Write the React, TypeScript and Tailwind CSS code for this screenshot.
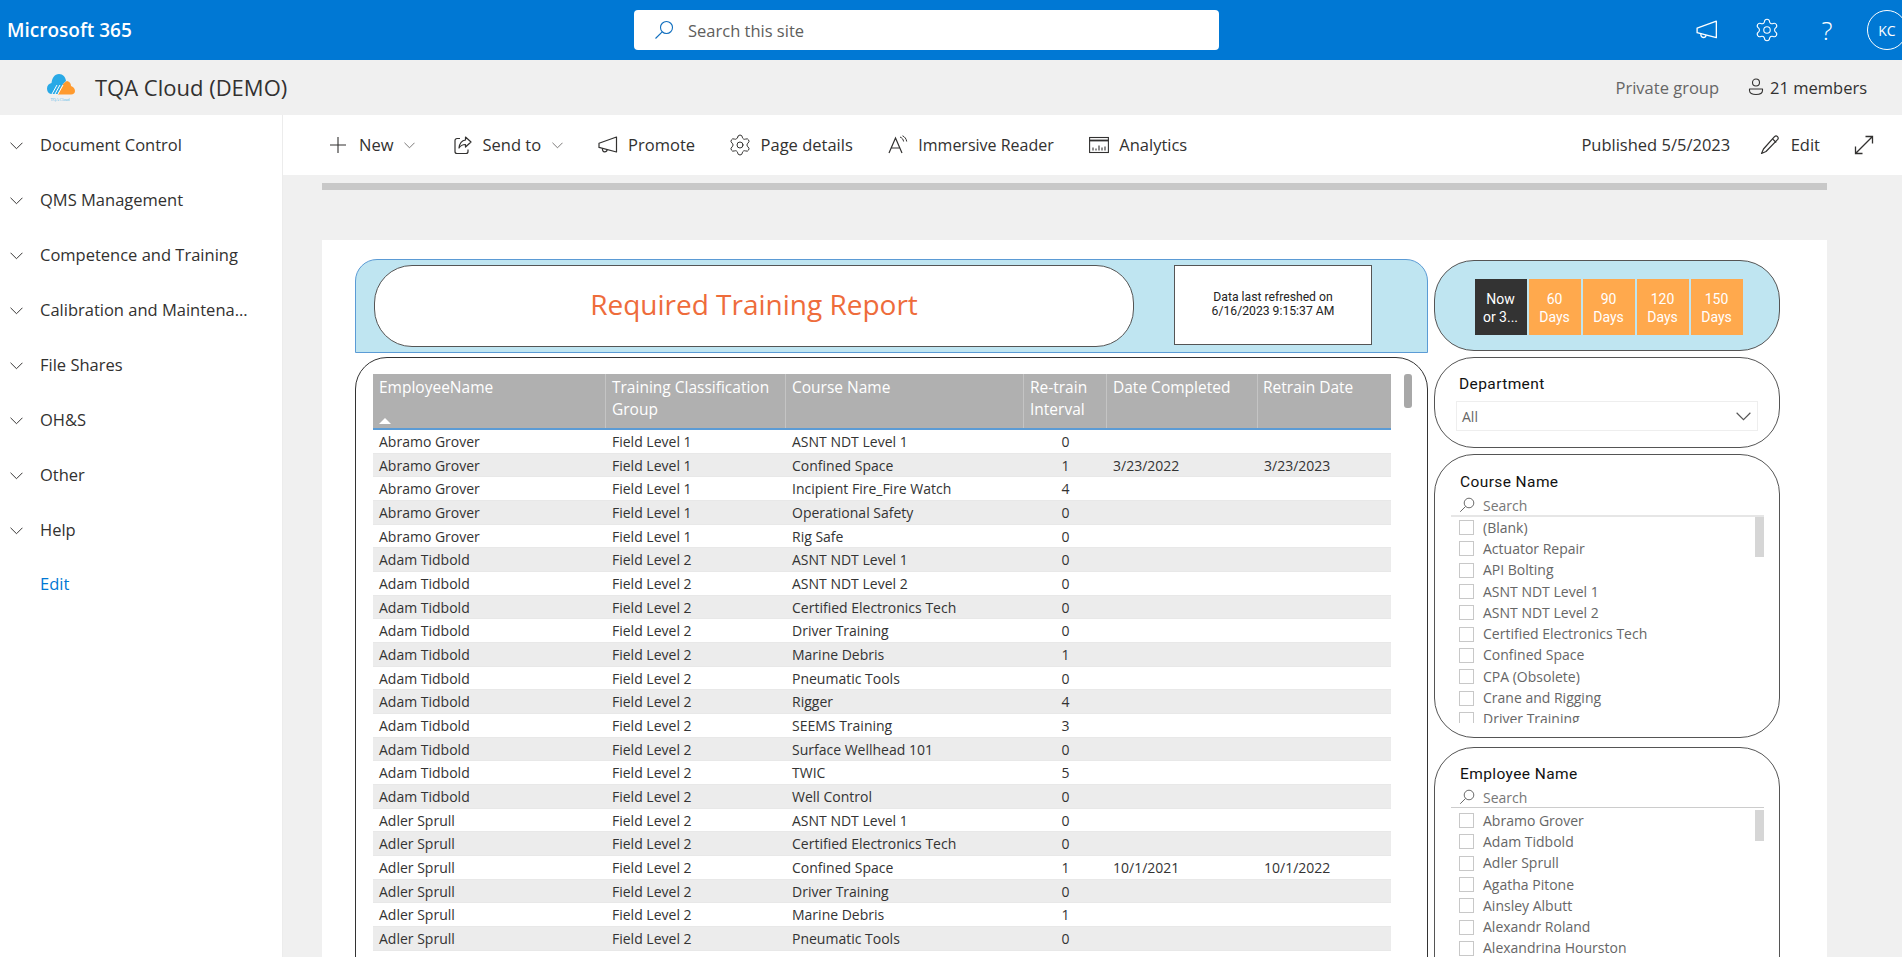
import { Settings } from "lucide-react";

const navItems = [
  "Document Control",
  "QMS Management",
  "Competence and Training",
  "Calibration and Maintena...",
  "File Shares",
  "OH&S",
  "Other",
  "Help",
];

// name, group, course, interval, completed, retrain
const rows: string[][] = [
  ["Abramo Grover", "Field Level 1", "ASNT NDT Level 1", "0", "", ""],
  ["Abramo Grover", "Field Level 1", "Confined Space", "1", "3/23/2022", "3/23/2023"],
  ["Abramo Grover", "Field Level 1", "Incipient Fire_Fire Watch", "4", "", ""],
  ["Abramo Grover", "Field Level 1", "Operational Safety", "0", "", ""],
  ["Abramo Grover", "Field Level 1", "Rig Safe", "0", "", ""],
  ["Adam Tidbold", "Field Level 2", "ASNT NDT Level 1", "0", "", ""],
  ["Adam Tidbold", "Field Level 2", "ASNT NDT Level 2", "0", "", ""],
  ["Adam Tidbold", "Field Level 2", "Certified Electronics Tech", "0", "", ""],
  ["Adam Tidbold", "Field Level 2", "Driver Training", "0", "", ""],
  ["Adam Tidbold", "Field Level 2", "Marine Debris", "1", "", ""],
  ["Adam Tidbold", "Field Level 2", "Pneumatic Tools", "0", "", ""],
  ["Adam Tidbold", "Field Level 2", "Rigger", "4", "", ""],
  ["Adam Tidbold", "Field Level 2", "SEEMS Training", "3", "", ""],
  ["Adam Tidbold", "Field Level 2", "Surface Wellhead 101", "0", "", ""],
  ["Adam Tidbold", "Field Level 2", "TWIC", "5", "", ""],
  ["Adam Tidbold", "Field Level 2", "Well Control", "0", "", ""],
  ["Adler Sprull", "Field Level 2", "ASNT NDT Level 1", "0", "", ""],
  ["Adler Sprull", "Field Level 2", "Certified Electronics Tech", "0", "", ""],
  ["Adler Sprull", "Field Level 2", "Confined Space", "1", "10/1/2021", "10/1/2022"],
  ["Adler Sprull", "Field Level 2", "Driver Training", "0", "", ""],
  ["Adler Sprull", "Field Level 2", "Marine Debris", "1", "", ""],
  ["Adler Sprull", "Field Level 2", "Pneumatic Tools", "0", "", ""],
  ["Adler Sprull", "Field Level 2", "Rigger", "4", "", ""],
];

const courses = [
  "(Blank)",
  "Actuator Repair",
  "API Bolting",
  "ASNT NDT Level 1",
  "ASNT NDT Level 2",
  "Certified Electronics Tech",
  "Confined Space",
  "CPA (Obsolete)",
  "Crane and Rigging",
  "Driver Training",
];

const employees = [
  "Abramo Grover",
  "Adam Tidbold",
  "Adler Sprull",
  "Agatha Pitone",
  "Ainsley Albutt",
  "Alexandr Roland",
  "Alexandrina Hourston",
];

const Chevron = ({ className }: { className?: string }) => (
  <svg viewBox="0 0 12 7" fill="none" stroke="currentColor" strokeWidth="0.9" className={className}>
    <path d="M.5.5 6 6l5.500-5.500" />
  </svg>
);

const SearchIcon = ({ className }: { className?: string }) => (
  <svg viewBox="0 0 20 20" fill="none" stroke="currentColor" strokeWidth="1.1" className={className}>
    <circle cx="12.5" cy="7.5" r="6" />
    <path d="M8.2 11.8 1.5 18.5" />
  </svg>
);

const Megaphone = ({ className }: { className?: string }) => (
  <svg viewBox="0 0 20 20" fill="none" stroke="currentColor" strokeWidth="1.2" className={className}>
    <path d="M18.500 2v15L1 12.400V8.200z" strokeLinejoin="round" />
    <path d="M4.500 13.400c-.4 2 .6 3.300 2.200 3.400 1.400 0 2.300-.9 2.500-2.200" />
  </svg>
);

const PlusIcon = () => (
  <svg viewBox="0 0 16 16" fill="none" stroke="currentColor" strokeWidth="1.1" className="mr-[2.500px] h-[16px] w-[16px]">
    <path d="M8 0v16M0 8h16" />
  </svg>
);

const SendIcon = () => (
  <svg viewBox="0 0 18 20" fill="none" stroke="currentColor" strokeWidth="1.2" className="h-[20px] w-[18px]">
    <path d="M6 3.500H3a2 2 0 0 0-2 2v11a2 2 0 0 0 2 2h9a2 2 0 0 0 2-2v-2" />
    <path d="M11.500 2 17 7l-5.500 5V9.500c-3 0-5 1-6.500 3.500.5-4 2.500-7.500 6.500-8z" strokeLinejoin="round" />
  </svg>
);

const ReaderIcon = () => (
  <svg viewBox="0 0 20 20" fill="none" stroke="currentColor" strokeWidth="1.2" className="h-[20px] w-[20px]">
    <path d="M1 18 7.500 3 14 18M3.500 13h8" />
    <path d="M12 2c2 .8 3.200 2.200 3.600 4.500M14.500 .8c2.300 1 3.800 3 4.200 5.700" strokeWidth="1" />
  </svg>
);

const AnalyticsIcon = () => (
  <svg viewBox="0 0 20 20" fill="none" stroke="currentColor" strokeWidth="1.1" className="h-[20px] w-[20px]">
    <rect x="0.600" y="2.500" width="18.800" height="15" />
    <path d="M.6 5.500h18.800" strokeWidth="1.800" />
    <path d="M4 15.500v-3M7 15.500v-2M10 15.500v-5M13 15.500v-3M16 15.500v-4" />
  </svg>
);

const PencilIcon = () => (
  <svg viewBox="0 0 20 20" fill="none" stroke="currentColor" strokeWidth="1.2" className="h-[20px] w-[20px]">
    <path d="M14.500 1.700c1-.9 2.300-.7 3 0s.9 2 0 3L6 16.500 1.500 18.500 3.500 14z" strokeLinejoin="round" />
    <path d="M12.500 3.800l3.700 3.700" />
  </svg>
);

const ExpandIcon = () => (
  <svg viewBox="0 0 20 20" fill="none" stroke="currentColor" strokeWidth="1.3" className="h-[20px] w-[20px]">
    <path d="M11.500 1.500h7v7M18.500 1.500 1.500 18.500M1.500 11.500v7h7" />
  </svg>
);

const PersonIcon = () => (
  <svg viewBox="0 0 16 20" fill="none" stroke="currentColor" strokeWidth="1.1" className="h-[20px] w-[16px]">
    <circle cx="8" cy="4.500" r="3.500" />
    <path d="M1.500 11h13v1.500c0 2.500-2.500 4-6.500 4s-6.500-1.500-6.500-4z" strokeLinejoin="round" />
  </svg>
);

const Logo = () => (
  <svg viewBox="0 0 30 30" className="h-[30px] w-[30px]">
    <path d="M5 21C2 20.500 1 18 1 15.500 1 12.500 3 10.500 5.500 10 6 5 8.500 1 13 1c4 0 6.500 3 7 7-3 2-6 8-8 13z" fill="#29a9e6" />
    <path d="M12 21.500c2-6 5-12 9-13.500 3 .5 4 3 4 5 2 .5 4 2.500 4 5 0 2-1.500 3.500-4 3.500z" fill="#ff9a2e" />
    <path d="M6 21 11 12M9 21l5-9M12 21l5-9" stroke="#ffffff" strokeWidth="1" />
    <text x="14" y="28" fontSize="4" textAnchor="middle" fill="#5bb7e8" fontFamily="'Liberation Serif', serif">TQA Cloud</text>
  </svg>
);

const CheckList = ({ items }: { items: string[] }) => (
  <div className="flex flex-1 flex-col overflow-hidden pl-[8px]">
    {items.map((item) => (
      <div key={item} className="flex h-[21.3px] shrink-0 items-center gap-[9px]">
        <span className="h-[15px] w-[15px] shrink-0 border border-[#c8c8c8] bg-white" />
        <span className="text-[14px] leading-none whitespace-nowrap text-[#666666]">{item}</span>
      </div>
    ))}
  </div>
);

const SlicerSearch = () => (
  <div className="mt-[3px] flex h-[20px] items-center gap-[8px] pl-[8px]">
    <SearchIcon className="h-[16px] w-[16px] text-[#555555]" />
    <span className="text-[14px] text-[#777777]">Search</span>
  </div>
);

const CommandItem = ({ icon, label, menu, className }: { icon: React.ReactNode; label: string; menu?: boolean; className?: string }) => (
  <div className={`flex items-center gap-[10.500px] ${className ?? ""}`}>
    {icon}
    <span>{label}</span>
    {menu && <Chevron className="h-[7px] w-[11px] text-[#605e5c]" />}
  </div>
);

export default function App() {
  return (
    <div className="h-[957px] w-[1902px] overflow-hidden bg-[#f0f0f0] font-['Open_Sans',sans-serif] text-[#323130]">
      {/* suite bar */}
      <div className="flex h-[60px] items-center bg-[#0078d4]">
        <div className="w-[634px] pl-[7px] text-[19px] font-semibold text-white">Microsoft 365</div>
        <div className="flex h-[40px] w-[585px] items-center gap-[14px] rounded-[4px] bg-white pl-[20px] text-[#605e5c]">
          <SearchIcon className="h-[20px] w-[20px] text-[#106ebe]" />
          <span className="pt-[3px] text-[16.500px]">Search this site</span>
        </div>
        <div className="mr-[-5px] flex flex-1 items-center justify-end text-white">
          <div className="flex w-[60px] justify-center"><Megaphone className="h-[22px] w-[22px]" /></div>
          <div className="flex w-[60px] justify-center"><Settings size={26} strokeWidth={1} /></div>
          <div className="flex w-[60px] justify-center text-[26px] leading-none font-light">?</div>
          <div className="ml-[10px] flex h-[40px] w-[40px] items-center justify-center rounded-full border border-white text-[14px] text-white">KC</div>
        </div>
      </div>

      {/* site header */}
      <div className="flex h-[55px] items-center pr-[35px] pl-[46px]">
        <Logo />
        <span className="ml-[19px] text-[22px]">TQA Cloud (DEMO)</span>
        <span className="ml-auto pt-[2px] text-[16.500px] text-[#666666]">Private group</span>
        <span className="mr-[6px] ml-[29px]"><PersonIcon /></span>
        <span className="pt-[2px] text-[16.500px]">21 members</span>
      </div>

      <div className="flex">
        {/* left nav */}
        <div className="h-[842px] w-[282px] shrink-0 bg-white pt-[3px]">
          {navItems.map((item) => (
            <div key={item} className="flex h-[55px] items-center gap-[17px] pl-[10px] text-[16.500px]">
              <Chevron className="h-[8px] w-[13px] shrink-0" />
              <span className="whitespace-nowrap">{item}</span>
            </div>
          ))}
          <div className="flex h-[53px] items-center pl-[40px] text-[16.500px] text-[#0078d4]">Edit</div>
        </div>

        <div className="min-w-0 flex-1 border-l border-[#ececec]">
          {/* command bar */}
          <div className="flex h-[60px] items-center bg-white pr-[28px] pl-[47px] text-[16.500px]">
            <div className="flex items-center gap-[35px]">
              <CommandItem icon={<PlusIcon />} label="New" menu className="mr-[4px]" />
              <CommandItem icon={<SendIcon />} label="Send to" menu />
              <CommandItem icon={<Megaphone className="h-[20px] w-[20px]" />} label="Promote" />
              <CommandItem icon={<Settings size={24} strokeWidth={1} className="-mx-[2px]" />} label="Page details" />
              <CommandItem icon={<ReaderIcon />} label="Immersive Reader" className="text-[16px]" />
              <CommandItem icon={<AnalyticsIcon />} label="Analytics" />
            </div>
            <span className="ml-auto">Published 5/5/2023</span>
            <div className="ml-[30px]">
              <CommandItem icon={<PencilIcon />} label="Edit" />
            </div>
            <div className="ml-[34px]"><ExpandIcon /></div>
          </div>

          {/* page body */}
          <div className="pt-[8px] pr-[75px] pl-[39px]">
            <div className="h-[7px] bg-[#c8c8c8]" />
            <div className="mt-[50px] grid h-[800px] grid-cols-[1073px_346px] gap-x-[6px] overflow-hidden bg-white pt-[19px] pl-[33px]">
              {/* report column */}
              <div className="flex flex-col gap-[4px]">
                <div className="flex h-[94px] shrink-0 items-start rounded-t-[22px] border border-[#5b9bd5] bg-[#bfe5f1] pt-[5px] pl-[18px]">
                  <div className="flex h-[82px] w-[760px] items-center justify-center rounded-[38px] border border-[#555555] bg-white pb-[4px] text-[28px] text-[#ee6c3b]">
                    Required Training Report
                  </div>
                  <div className="ml-[40px] flex h-[80px] w-[198px] items-center justify-center border border-[#555555] bg-white pb-[2px] text-center font-['Roboto',sans-serif] text-[12.200px] leading-[14px] text-[#222222]">
                    <div>Data last refreshed on<br />6/16/2023 9:15:37 AM</div>
                  </div>
                </div>

                <div className="flex flex-1 items-start rounded-t-[32px] border border-[#333333] pt-[16px] pl-[17px]">
                  <div className="w-[1018px]">
                    <div className="grid h-[56px] grid-cols-[233px_180px_238px_83px_151px_133px] border-b-2 border-[#5b9bd5] bg-[#b0b0b0] text-[15.500px] leading-[22px] text-white">
                      <div className="relative border-r border-[#c4c4c4] px-[6px] pt-[2px]">
                        EmployeeName
                        <span className="absolute bottom-[4px] left-[6px] h-0 w-0 border-x-[6px] border-b-[6px] border-x-transparent border-b-white" />
                      </div>
                      <div className="border-r border-[#c4c4c4] px-[6px] pt-[2px]">Training Classification Group</div>
                      <div className="border-r border-[#c4c4c4] px-[6px] pt-[2px]">Course Name</div>
                      <div className="border-r border-[#c4c4c4] px-[6px] pt-[2px]">Re-train Interval</div>
                      <div className="border-r border-[#c4c4c4] px-[6px] pt-[2px]">Date Completed</div>
                      <div className="px-[5px] pt-[2px]">Retrain Date</div>
                    </div>
                    {rows.map((row, i) => (
                      <div
                        key={row[0] + row[2]}
                        className={`grid h-[23.68px] grid-cols-[233px_180px_238px_83px_151px_133px] items-center border-b border-[#e8e8e8] text-[14px] whitespace-nowrap text-[#333333] ${i % 2 === 1 ? "bg-[#ececec]" : "bg-white"}`}
                      >
                        <div className="px-[6px]">{row[0]}</div>
                        <div className="px-[6px]">{row[1]}</div>
                        <div className="px-[6px]">{row[2]}</div>
                        <div className="text-center">{row[3]}</div>
                        <div className="px-[6px]">{row[4]}</div>
                        <div className="px-[6px]">{row[5]}</div>
                      </div>
                    ))}
                  </div>
                  <div className="ml-[13px] h-[34px] w-[8px] rounded-[3px] bg-[#a8a8a8]" />
                </div>
              </div>

              {/* filter column */}
              <div className="flex flex-col font-['Roboto',sans-serif]">
                <div className="mt-[1px] flex h-[91px] shrink-0 items-center justify-center gap-[2px] rounded-[40px] border border-[#555555] bg-[#bfe5f1] pt-[2px] pl-[3px] text-center text-[14px] leading-[18.500px] text-white">
                  <div className="flex h-[56px] w-[52px] items-center justify-center bg-[#333333] pt-[3px]"><span>Now<br />or 3...</span></div>
                  {["60", "90", "120", "150"].map((d) => (
                    <div key={d} className="flex h-[56px] w-[52px] items-center justify-center bg-[#ffa94d] pt-[3px]"><span>{d}<br />Days</span></div>
                  ))}
                </div>

                <div className="mt-[6px] h-[91px] shrink-0 rounded-[40px] border border-[#555555] px-[21px] pt-[16px]">
                  <div className="pl-[3px] text-[15.500px] leading-[20px] tracking-[0.4px] text-[#111111]">Department</div>
                  <div className="mt-[7px] flex h-[30px] items-center justify-between border border-[#eeeeee] pr-[6px] pl-[5px] font-['Open_Sans',sans-serif] text-[14px] text-[#666666]">
                    All
                    <Chevron className="h-[9px] w-[15px] text-[#555555]" />
                  </div>
                </div>

                <div className="mt-[6px] h-[284px] shrink-0 rounded-[40px] border border-[#555555] pt-[17px] pr-[15px] pl-[16px]">
                  <div className="pl-[9px] text-[15.500px] leading-[20px] tracking-[0.4px] text-[#111111]">Course Name</div>
                  <div className="font-['Open_Sans',sans-serif]">
                    <SlicerSearch />
                    <div className="h-[2px] bg-[#e6e6e6]" />
                    <div className="flex h-[206px]">
                      <CheckList items={courses} />
                      <div className="h-[40px] w-[9px] bg-[#d6d6d6]" />
                    </div>
                  </div>
                </div>

                <div className="mt-[9px] h-[300px] shrink-0 rounded-t-[40px] border border-[#555555] pt-[16px] pr-[15px] pl-[16px]">
                  <div className="pl-[9px] text-[15.500px] leading-[20px] tracking-[0.4px] text-[#111111]">Employee Name</div>
                  <div className="font-['Open_Sans',sans-serif]">
                    <SlicerSearch />
                    <div className="h-[1px] bg-[#cccccc]" />
                    <div className="flex items-start pt-[2px]">
                      <CheckList items={employees} />
                      <div className="h-[31px] w-[9px] bg-[#d6d6d6]" />
                    </div>
                  </div>
                </div>
              </div>
            </div>
          </div>
        </div>
      </div>
    </div>
  );
}
